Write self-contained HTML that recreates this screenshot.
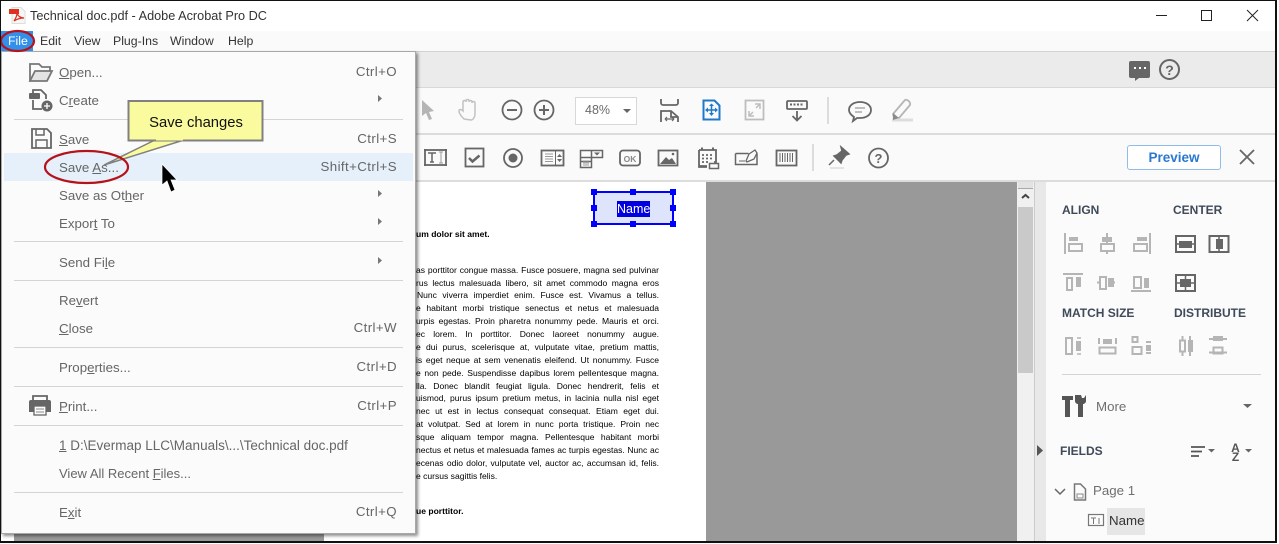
<!DOCTYPE html>
<html lang="en"><head><meta charset="utf-8"><title>Technical doc.pdf - Adobe Acrobat Pro DC</title>
<style>
html,body{margin:0;padding:0;background:#fff}
body{width:1279px;height:544px;overflow:hidden;position:relative;font-family:"Liberation Sans",sans-serif}
#w{position:absolute;left:0;top:0;width:1279px;height:544px;filter:blur(.3px)}
.a{position:absolute}
.t{position:absolute;white-space:nowrap;line-height:16px}
.m{position:absolute;left:59px;white-space:nowrap;font-size:13.3px;line-height:16px;color:#666}
.s{position:absolute;right:882px;white-space:nowrap;font-size:13.3px;letter-spacing:.4px;line-height:16px;color:#666}
.sep{position:absolute;left:14px;width:389px;height:1px;background:#d4d4d4}
.mb{position:absolute;top:33px;font-size:12.3px;line-height:16px;color:#333;white-space:nowrap}
.l{position:absolute;left:416px;width:243px;font-size:8.55px;line-height:12px;color:#000;white-space:nowrap;text-align:justify;text-align-last:justify}
.h{position:absolute;font-size:12px;font-weight:bold;color:#3f4a5a;line-height:14px;white-space:nowrap}
svg{position:absolute;left:0;top:0;overflow:visible}
u{text-underline-offset:1px}
</style></head><body><div id="w">
<!-- chrome bands -->
<div class="a" style="left:1px;top:1px;width:1274px;height:30px;background:#fff"></div>
<div class="a" style="left:1px;top:31px;width:1274px;height:20px;background:#fafafa"></div>
<div class="a" style="left:1px;top:51px;width:1274px;height:1px;background:#d2d2d2"></div>
<div class="a" style="left:1px;top:52px;width:1274px;height:35px;background:#ebebeb"></div>
<div class="a" style="left:1px;top:87px;width:1274px;height:1px;background:#d8d8d8"></div>
<div class="a" style="left:1px;top:88px;width:1274px;height:46px;background:#fafafa"></div>
<div class="a" style="left:1px;top:133px;width:1274px;height:2px;background:#dcdcdc"></div>
<div class="a" style="left:1px;top:135px;width:1274px;height:46px;background:#fafafa"></div>
<div class="a" style="left:1px;top:180px;width:1274px;height:2px;background:#dcdcdc"></div>
<!-- document area -->
<div class="a" style="left:1px;top:182px;width:1016px;height:359px;background:#fff"></div>
<div class="a" style="left:706px;top:182px;width:311px;height:359px;background:#999"></div>
<div class="a" style="left:14px;top:532px;width:310px;height:9px;background:#999"></div>
<div class="a" style="left:1017px;top:182px;width:17px;height:359px;background:#f0f0f0"></div>
<div class="a" style="left:1018px;top:182px;width:15px;height:6px;background:#e2e2e2;border-bottom:1px solid #aaa"></div>
<div class="a" style="left:1018px;top:207px;width:15px;height:166px;background:#c9c9c9"></div>
<div class="a" style="left:1034px;top:182px;width:1px;height:359px;background:#ccc"></div>
<div class="a" style="left:1035px;top:182px;width:11px;height:359px;background:#e8e8e8"></div>
<div class="a" style="left:1046px;top:182px;width:229px;height:359px;background:#fbfbfb"></div>
<!-- document text -->
<div class="l" style="top:228px;font-weight:bold;text-align-last:left">um dolor sit amet.</div>
<div class="l" style="top:264px">as porttitor congue massa. Fusce posuere, magna sed pulvinar</div>
<div class="l" style="top:277px">rus lectus malesuada libero, sit amet commodo magna eros</div>
<div class="l" style="top:289px;left:417px;width:242px">Nunc viverra imperdiet enim. Fusce est. Vivamus a tellus.</div>
<div class="l" style="top:302px">e habitant morbi tristique senectus et netus et malesuada</div>
<div class="l" style="top:315px">urpis egestas. Proin pharetra nonummy pede. Mauris et orci.</div>
<div class="l" style="top:328px">ec lorem. In porttitor. Donec laoreet nonummy augue.</div>
<div class="l" style="top:341px">e dui purus, scelerisque at, vulputate vitae, pretium mattis,</div>
<div class="l" style="top:354px">is eget neque at sem venenatis eleifend. Ut nonummy. Fusce</div>
<div class="l" style="top:367px">e non pede. Suspendisse dapibus lorem pellentesque magna.</div>
<div class="l" style="top:380px">lla. Donec blandit feugiat ligula. Donec hendrerit, felis et</div>
<div class="l" style="top:392px">uismod, purus ipsum pretium metus, in lacinia nulla nisl eget</div>
<div class="l" style="top:405px">nec ut est in lectus consequat consequat. Etiam eget dui.</div>
<div class="l" style="top:418px">at volutpat. Sed at lorem in nunc porta tristique. Proin nec</div>
<div class="l" style="top:431px">sque aliquam tempor magna. Pellentesque habitant morbi</div>
<div class="l" style="top:444px">nectus et netus et malesuada fames ac turpis egestas. Nunc ac</div>
<div class="l" style="top:457px">ecenas odio dolor, vulputate vel, auctor ac, accumsan id, felis.</div>
<div class="l" style="top:470px;text-align-last:left">e cursus sagittis felis.</div>
<div class="l" style="top:505px;font-weight:bold;text-align-last:left">ue porttitor.</div>
<!-- form field -->
<div class="a" style="left:593px;top:191px;width:77px;height:30px;background:#dde4fb;border:2px solid #00f"></div>
<div class="a" style="left:617px;top:201px;width:33px;height:16px;background:#0000e0;color:#fff;font-size:12.5px;line-height:16px;text-align:center">Name</div>
<svg width="1279" height="544" fill="#00f">
<rect x="591" y="189" width="6" height="6"/><rect x="630" y="189" width="6" height="6"/><rect x="670" y="189" width="6" height="6"/>
<rect x="591" y="205" width="6" height="6"/><rect x="670" y="205" width="6" height="6"/>
<rect x="591" y="221" width="6" height="6"/><rect x="630" y="221" width="6" height="6"/><rect x="670" y="221" width="6" height="6"/>
</svg>
<!-- title + menubar -->
<div class="t" style="left:30px;top:8px;font-size:12.7px;color:#333">Technical doc.pdf - Adobe Acrobat Pro DC</div>
<div class="a" style="left:1px;top:31px;width:32px;height:20px;background:#3390ea"></div>
<div class="mb" style="left:8px;color:#fff">File</div>
<div class="mb" style="left:40px">Edit</div>
<div class="mb" style="left:74px">View</div>
<div class="mb" style="left:113px">Plug-Ins</div>
<div class="mb" style="left:170px">Window</div>
<div class="mb" style="left:228px">Help</div>
<!-- toolbar icons -->
<svg width="1279" height="544" fill="none" stroke="#666" stroke-width="2">
<!-- pdf icon -->
<path d="M12 7.500h9l4 4v12H12z" fill="#f6f6f6" stroke="#ddd" stroke-width="1"/><path d="M9 9h10v5H9z" fill="#e0301e" stroke="none"/><path d="M14 21c2-3 3-6 3-8 1 3 3 5 7 5-4 0-7 1-10 3z" stroke="#e0301e" stroke-width="1.200"/>
<!-- window controls -->
<path d="M1156 15.500h11" stroke="#222" stroke-width="1"/><rect x="1201.500" y="10.500" width="10" height="10" stroke="#222" stroke-width="1"/><path d="M1247 10l11 11M1258 10l-11 11" stroke="#222" stroke-width="1"/>
<!-- chat & help -->
<path d="M1131 61h17a2 2 0 0 1 2 2v13a2 2 0 0 1-2 2h-9l-4 3v-3h-4a2 2 0 0 1-2-2V63a2 2 0 0 1 2-2z" fill="#666" stroke="none"/>
<path d="M1134 68h3M1139 68h3M1144 68h2" stroke="#fff" stroke-dasharray="2 2"/>
<circle cx="1169.500" cy="69.500" r="9.500"/><text x="1169.500" y="75" font-size="14" font-weight="bold" text-anchor="middle" fill="#666" stroke="none" font-family="Liberation Sans,sans-serif">?</text>
<!-- row 1 -->
<path d="M422 100l12 11-5 1 3 7-3 1-3-7-4 3z" fill="#b5b5b5" stroke="none"/>
<path d="M464 119c-3-3-5-6-5-8 0-2 2-2 4 0v-9c0-2 3-2 3 0v-1c0-2 3-2 3 0v1c0-2 3-2 3 0v1c0-2 3-2 3 0v11c0 3-2 6-4 6z" stroke="#c2c2c2" stroke-width="1.500"/>
<circle cx="512" cy="110" r="9.500" stroke-width="1.800"/><path d="M507 110h10"/>
<circle cx="544" cy="110" r="9.500" stroke-width="1.800"/><path d="M539 110h10M544 105v10"/>
<rect x="575.500" y="97.500" width="61" height="27" fill="#fff" stroke="#d8d8d8" stroke-width="1"/>
<path d="M623 109h8l-4 4z" fill="#666" stroke="none"/>
<path d="M661 99v4a2 2 0 0 0 2 2h13a2 2 0 0 0 2-2v-4" stroke-width="1.800"/><path d="M661 122v-11h10l7 6v5M671 111v6h7" stroke-width="1.800"/><path d="M665 119h9M665 119l2-2M665 119l2 2M674 119l-2-2M674 119l-2 2" stroke-width="1.200"/>
<path d="M703.500 100.500h11l5 5v14h-16z" stroke="#1f79c9" stroke-width="2"/><path d="M711.500 104v11M706 110h11" stroke="#1f79c9" stroke-width="1.500"/><path d="M709 106l2.500-2.500L714 106zM709 113l2.500 3 2.500-3zM708 107.500l-3 2.500 3 2.500zM715 107.500l3 2.500-3 2.500z" fill="#1f79c9" stroke="none"/>
<rect x="745.500" y="100.500" width="18" height="19" stroke="#bdbdbd" stroke-width="1.800"/><path d="M749 116l4-4M760 104l-4 4" stroke="#bdbdbd" stroke-width="1.500"/><path d="M749 111v5h5M755 104h5v5" stroke="#bdbdbd" stroke-width="1.500"/>
<rect x="787" y="101" width="20" height="8" rx="1" stroke-width="1.800"/><path d="M790 104.500h14" stroke-dasharray="2 1.500"/><path d="M797 111v9M792.500 116l4.500 4.500 4.500-4.500" stroke-width="1.800"/>
<path d="M828 97v27" stroke="#dcdcdc"/>
<path d="M860 102c6 0 11 3 11 8s-5 8-11 8c-1 0-2 0-3 0l-4 3 1-4c-3-2-5-4-5-7 0-5 5-8 11-8z" stroke-width="1.800"/><path d="M855 108h10M855 112h7" stroke="#aaa" stroke-width="1.500"/>
<path d="M893 114l12-14c2-1 6 2 5 5l-11 13h-5z" stroke="#b5b5b5" stroke-width="1.800"/><path d="M892 120h21" stroke="#ddd" stroke-width="3"/><path d="M893 113l6 5-6 2z" fill="#8a8a8a" stroke="none"/>
<!-- row 2 -->
<rect x="425" y="150" width="21" height="15" stroke-width="1.800"/><rect x="424" y="149" width="2" height="2" fill="#666" stroke="none"/><rect x="445" y="149" width="2" height="2" fill="#666" stroke="none"/><rect x="424" y="164" width="2" height="2" fill="#666" stroke="none"/><rect x="445" y="164" width="2" height="2" fill="#666" stroke="none"/>
<path d="M428 153h8M432 153v9M430 162h4" stroke-width="1.500"/><path d="M439 152h4M441 152v11M439 163h4" stroke="#999" stroke-width="1"/>
<rect x="465.500" y="148.500" width="18" height="18" stroke-width="1.800"/><path d="M469 158l3.500 3.500 7-6" stroke-width="2.500"/>
<circle cx="513" cy="158" r="9" stroke-width="1.800"/><circle cx="513" cy="158" r="4.500" fill="#666" stroke="none"/>
<rect x="541.500" y="150.500" width="22" height="15" stroke-width="1.800"/><path d="M545 154h8M545 156.500h8M545 159h8M545 161.500h8" stroke="#999" stroke-width="1"/><path d="M555.500 150v15" stroke-width="1"/><path d="M557 157l2.500-3 2.500 3zM557 159l2.500 3 2.500-3z" fill="#666" stroke="none"/>
<path d="M580.500 150.500h11v11h-11zM591.500 150.500h11v7h-11zM580.500 157.500h11v10h-11z" stroke-width="1.500"/><path d="M594 152.500h6l-3 3z" fill="#666" stroke="none"/><path d="M583 161h6M583 163h6M583 165h6" stroke="#999" stroke-width="1"/>
<rect x="620" y="150.500" width="20" height="15" rx="3" stroke-width="1.800"/><text x="630" y="162" font-size="8.500" font-weight="bold" text-anchor="middle" fill="#888" stroke="none" font-family="Liberation Sans,sans-serif">OK</text>
<rect x="658.500" y="150.500" width="19" height="15" stroke-width="1.800"/><path d="M660 164l6-7 3 3 3-2 4 6z" fill="#666" stroke="none"/><circle cx="673" cy="154" r="1.300" fill="#666" stroke="none"/>
<path d="M699 150h17v12h-2M707 166h-8z" stroke-width="1.800"/><path d="M699 150v17h8" stroke-width="1.800"/><path d="M702 147.500v3M713 147.500v3" stroke-width="2"/><path d="M702 155h2M706 155h2M710 155h2M702 158.500h2M706 158.500h2M710 158.500h2M702 162h2M706 162h2" stroke-width="1.800"/><rect x="709.500" y="163.500" width="9" height="5" stroke-width="1.500"/>
<path d="M735.500 153.500h13M757 153.500v11h-21.500v-11" stroke-width="1.500"/><path d="M739 161h6" stroke-width="1"/><path d="M746 161l3-7 6-4 2 3-3 6-7 3z" stroke-width="1.300"/>
<rect x="776.500" y="150.500" width="20" height="15" stroke-width="1.800"/><path d="M780 153v9M782.500 153v9M785 153v9M787.500 153v9M790 153v9M792.500 153v9" stroke-width="1"/>
<path d="M813 144v27" stroke="#dcdcdc"/>
<path d="M841 147l8 7-3 1-4 5-1 3-7-7 3-1 5-4zM834 160l-5 5" fill="#666" stroke-width="1.500"/><path d="M830 168h14" stroke="#ddd" stroke-width="1.500"/>
<circle cx="878.500" cy="158" r="9.500" stroke-width="1.800"/><text x="878.500" y="163" font-size="13" font-weight="bold" text-anchor="middle" fill="#666" stroke="none" font-family="Liberation Sans,sans-serif">?</text>
<path d="M1240 150l14 14M1254 150l-14 14" stroke-width="1.800"/>
<!-- scroll arrow / strip -->
<path d="M1022 201l3.500-3 3.500 3" stroke="#444" stroke-width="2" transform="translate(0,-3)"/>
<path d="M1037 445l6 5.500-6 5.500z" fill="#555" stroke="none"/>
<!-- align icons -->
<g stroke="#b5b5b5" stroke-width="2">
<path d="M1065 233v21M1069 244h13v7h-13z"/><rect x="1069" y="237" width="9" height="4" fill="#b5b5b5" stroke="none"/>
<path d="M1107 233v4M1107 241v3M1107 251v3M1101 244h13v7h-13z"/><rect x="1102" y="237" width="10" height="5" fill="#b5b5b5" stroke="none"/>
<path d="M1150 233v21M1134 244h13v7h-13z"/><rect x="1137" y="237" width="10" height="4" fill="#b5b5b5" stroke="none"/>
<path d="M1063 274h20M1067 278v12h5v-12z"/><rect x="1076" y="277" width="5" height="10" fill="#b5b5b5" stroke="none"/>
<path d="M1097 282.500h3M1112 282.500h3M1100 277h6v12h-6z"/><rect x="1108" y="278" width="6" height="9" fill="#b5b5b5" stroke="none"/>
<path d="M1131 291h20M1134 277h7v11h-7z"/><rect x="1144" y="278" width="5" height="10" fill="#b5b5b5" stroke="none"/>
</g>
<g stroke="#666" stroke-width="2">
<rect x="1176" y="236" width="19" height="16"/><path d="M1176 244h19" stroke-width="1.500"/><rect x="1179" y="241" width="13" height="7" fill="#666" stroke="none"/>
<rect x="1209.500" y="236" width="19" height="16"/><path d="M1219 236v16" stroke-width="1.500"/><rect x="1216" y="239" width="7" height="10" fill="#666" stroke="none"/>
<rect x="1176" y="275" width="19" height="16"/><path d="M1176 283h19M1185.500 275v16" stroke-width="1.500"/><rect x="1180" y="279" width="11" height="8" fill="#666" stroke="none"/>
</g>
<g stroke="#b5b5b5" stroke-width="2">
<path d="M1066 338h6v16h-6z"/><path d="M1077 338h4M1077 354h4" stroke-width="1.500"/><rect x="1076" y="341" width="5" height="10" fill="#b5b5b5" stroke="none"/>
<path d="M1099 338v6M1116 338v6M1099.500 347.500h16v6h-16z"/><rect x="1103" y="339" width="9" height="5" fill="#b5b5b5" stroke="none"/>
<path d="M1132.500 337h5v5h-5zM1132.500 347h9v7h-9zM1146 342h5M1146 353h5"/><rect x="1146" y="345" width="5" height="6" fill="#b5b5b5" stroke="none"/>
<path d="M1180 340.500h5v11h-5zM1182.500 336v4M1182.500 352v4M1190 336v20"/><rect x="1188" y="340" width="5" height="12" fill="#b5b5b5" stroke="none"/>
<path d="M1209 339h18M1209 352.500h18"/><rect x="1213" y="336" width="10" height="5" fill="#b5b5b5" stroke="none"/><path d="M1213.500 347.500h9v6h-9z"/>
</g>
<!-- panel -->
<path d="M1062 374.500h199" stroke="#d4d4d4" stroke-width="1"/>
<path d="M1062 396h11v4h-3v17h-5v-17h-3zM1075 395v6c0 2 2 3 3 3v13h5v-13c1 0 3-1 3-3v-6l-2 3h-2l-1-3z" fill="#555" stroke="none"/>
<path d="M1243 404h9l-4.500 4z" fill="#666" stroke="none"/>
<path d="M1191 447h14M1191 451.500h11M1191 456h8" stroke="#555" stroke-width="1.800"/><path d="M1208 449h7l-3.500 3.500z" fill="#666" stroke="none"/>
<text x="1235.500" y="452" font-size="12" font-weight="bold" text-anchor="middle" fill="#555" stroke="none" font-family="Liberation Sans,sans-serif">A</text><text x="1235.500" y="461" font-size="12" font-weight="bold" text-anchor="middle" fill="#555" stroke="none" font-family="Liberation Sans,sans-serif">Z</text><path d="M1245 449h7l-3.500 3.500z" fill="#666" stroke="none"/>
<path d="M1055 489l5 5 5-5" stroke="#666" stroke-width="1.500"/>
<path d="M1074.500 484h6l5 5v11h-11z" stroke="#777" stroke-width="1.500"/><path d="M1077 494h6v4h-6z" stroke="#888" stroke-width="1"/>
<rect x="1088.500" y="514.500" width="15" height="11" stroke="#777" stroke-width="1.200"/><path d="M1091 518h5M1093.500 518v6M1099 518v6" stroke="#777" stroke-width="1"/>
</svg>
<div class="t" style="left:585px;top:102px;font-size:12.5px;color:#6a6a6a">48%</div>
<div class="a" style="left:1127px;top:145px;width:92px;height:23px;border:1px solid #8fbcec;border-radius:3px;background:#fff;color:#2a78d0;font-size:13.5px;font-weight:bold;text-align:center;line-height:24px">Preview</div>
<div class="h" style="left:1062px;top:203px">ALIGN</div>
<div class="h" style="left:1173px;top:203px">CENTER</div>
<div class="h" style="left:1062px;top:306px">MATCH SIZE</div>
<div class="h" style="left:1174px;top:306px">DISTRIBUTE</div>
<div class="h" style="left:1060px;top:444px">FIELDS</div>
<div class="t" style="left:1096px;top:399px;font-size:13.3px;color:#6f6f6f">More</div>
<div class="t" style="left:1093px;top:483px;font-size:13.3px;color:#6f6f6f">Page 1</div>
<div class="a" style="left:1107px;top:508px;width:38px;height:27px;background:#e6e6e6"></div>
<div class="t" style="left:1109px;top:513px;font-size:13.3px;color:#333">Name</div>
<!-- menu -->
<div class="a" style="left:1px;top:51px;width:413px;height:481px;background:#fbfbfb;border:1px solid #a8a8a8;box-shadow:2px 2px 3px rgba(0,0,0,.45)"></div>
<div class="a" style="left:4px;top:153px;width:409px;height:28px;background:#e5f0fa"></div>
<div class="sep" style="top:119px"></div><div class="sep" style="top:241px"></div><div class="sep" style="top:280px"></div><div class="sep" style="top:347px"></div><div class="sep" style="top:386px"></div><div class="sep" style="top:425px"></div><div class="sep" style="top:492px"></div>
<div class="m" style="top:65px"><u>O</u>pen...</div><div class="s" style="top:64px">Ctrl+O</div>
<div class="m" style="top:93px">C<u>r</u>eate</div>
<div class="m" style="top:132px"><u>S</u>ave</div><div class="s" style="top:131px">Ctrl+S</div>
<div class="m" style="top:160px">Save <u>A</u>s...</div><div class="s" style="top:159px">Shift+Ctrl+S</div>
<div class="m" style="top:188px">Save as Ot<u>h</u>er</div>
<div class="m" style="top:216px">Expor<u>t</u> To</div>
<div class="m" style="top:255px">Send Fi<u>l</u>e</div>
<div class="m" style="top:293px">Re<u>v</u>ert</div>
<div class="m" style="top:321px"><u>C</u>lose</div><div class="s" style="top:320px">Ctrl+W</div>
<div class="m" style="top:360px">Prop<u>e</u>rties...</div><div class="s" style="top:359px">Ctrl+D</div>
<div class="m" style="top:399px"><u>P</u>rint...</div><div class="s" style="top:398px">Ctrl+P</div>
<div class="m" style="top:438px;font-size:13.5px"><u>1</u> D:\Evermap LLC\Manuals\...\Technical doc.pdf</div>
<div class="m" style="top:466px;font-size:13px">View All Recent <u>F</u>iles...</div>
<div class="m" style="top:505px">E<u>x</u>it</div><div class="s" style="top:504px">Ctrl+Q</div>
<svg width="1279" height="544" fill="none" stroke="#666" stroke-width="1.800">
<!-- submenu arrows -->
<path d="M378 95l4 3.500-4 3.500zM378 190l4 3.500-4 3.500zM378 218l4 3.500-4 3.500zM378 257l4 3.500-4 3.500z" fill="#777" stroke="none"/>
<!-- open -->
<path d="M30 81V64h9l3 3h8v4" stroke="#777" stroke-width="1.800"/><path d="M30 81l5-10h17l-5 10z" fill="#e4e4e4" stroke="#777" stroke-width="1.800"/>
<!-- create -->
<path d="M33 94v-4h8l5 5v4" stroke-width="1.800"/><rect x="29" y="93" width="11" height="6" rx="1" fill="#666" stroke="none"/>
<path d="M33 100v9h9" stroke-width="1.800"/><circle cx="47" cy="106" r="5.500" fill="#666" stroke="none"/><path d="M44 106h6M47 103v6" stroke="#fff" stroke-width="1.300"/>
<!-- save -->
<path d="M32 129h15l4 4v15H32z" stroke-width="1.800"/><path d="M36 129v6h8v-6M36 148v-8h11v8" stroke-width="1.500"/>
<!-- print -->
<path d="M33 401v-5h14v5" stroke-width="1.800"/><path d="M31 400h18a2 2 0 0 1 2 2v10H29v-10a2 2 0 0 1 2-2z" fill="#666" stroke="none"/><rect x="34" y="406" width="12" height="9" fill="#fbfbfb" stroke="#666" stroke-width="1.300"/><path d="M36 409h8M36 412h8" stroke="#888" stroke-width="1"/>
<!-- callout -->
<path d="M155 140L104 165 184 140z" fill="#fafa9e" stroke="#808080" stroke-width="1.500"/>
<rect x="128.500" y="101" width="134" height="39.500" fill="#fafa9e" stroke="#808080" stroke-width="2"/>
<path d="M156 139.500h27" stroke="#fafa9e" stroke-width="2"/>
<text x="196" y="127" font-size="14.800" text-anchor="middle" fill="#111" stroke="none" font-family="Liberation Sans,sans-serif">Save changes</text>
<!-- red ellipses -->
<ellipse cx="86.500" cy="167" rx="41.500" ry="16" stroke="#b5121b" stroke-width="2.200"/>
<ellipse cx="17.500" cy="41" rx="16.500" ry="10" stroke="#b5121b" stroke-width="2.200"/>
<!-- pointer -->
<path d="M162 164v21l5-4 4 11 4-2-4-10h6z" fill="#000" stroke="#fff" stroke-width=".7"/>
</svg>
<!-- outer frame -->
<div class="a" style="left:0;top:0;width:1275px;height:1px;background:#111"></div>
<div class="a" style="left:0;top:0;width:1px;height:543px;background:#111"></div>
<div class="a" style="left:1275px;top:0;width:2px;height:543px;background:#111"></div>
<div class="a" style="left:0;top:541px;width:1277px;height:2px;background:#111"></div>
</div></body></html>
